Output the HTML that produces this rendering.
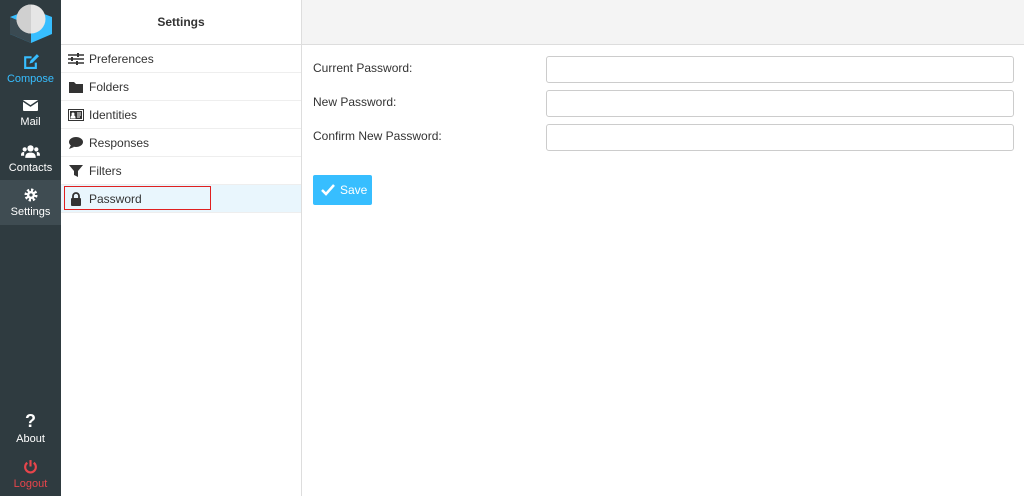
<!DOCTYPE html><html><head><style>
body{margin:0;width:1024px;height:496px;overflow:hidden;font-family:"Liberation Sans",sans-serif;font-size:12px;color:#333;background:#fff;position:relative}
.sb{position:absolute;left:0;top:0;width:61px;height:496px;background:#2f3b40}
.nav{position:absolute;left:0;width:61px;text-align:center;color:#fff;font-size:11px}
.nav svg{display:block;margin:0 auto 4px}
.list{position:absolute;left:61px;top:0;width:240px;height:496px;border-right:1px solid #ddd}
.lh{height:44px;border-bottom:1px solid #ddd;text-align:center;line-height:44px;font-weight:bold;font-size:12px;color:#333}
.row{height:27px;border-bottom:1px solid #eee;display:flex;align-items:center;padding-left:7px;font-size:12px}
.row svg{width:16px;height:14px;margin-right:5px}
.rh{position:absolute;left:302px;top:0;right:0;height:44px;background:#f4f4f4;border-bottom:1px solid #ddd}
.lab{position:absolute;left:313px;font-size:12px}
.inp{position:absolute;left:546px;width:466px;height:25px;border:1px solid #ccc;border-radius:3px}
</style></head><body>
<div class="sb">
<svg style="position:absolute;left:8px;top:0" width="46" height="44" viewBox="0 0 46 44"><polygon points="2,17 23,9 44,17 44,34 23,43 2,34" fill="#37beff"/><polygon points="2,17 23,26 23,43 2,34" fill="#3a4a52"/><circle cx="23" cy="19" r="14.5" fill="#e6e6e6"/><path d="M23 4.5a14.5 14.5 0 0 0 0 29z" fill="#d0d0d0"/></svg>
<div class="nav" style="top:53px;color:#37beff"><svg width="17" height="16" viewBox="0 0 16 15"><path d="M2 3h7v2H4v8h8V9h2v6H2z" fill="#37beff"/><path d="M7 10l1-3 6-6 2 2-6 6z" fill="#37beff"/></svg>Compose</div>
<div class="nav" style="top:99px"><svg width="15" height="13" viewBox="0 0 15 13"><rect x="0" y="1" width="15" height="11" rx="1" fill="#fff"/><path d="M0 2l7.5 5 7.5-5" stroke="#2f3b40" stroke-width="1.5" fill="none"/></svg>Mail</div>
<div class="nav" style="top:144px"><svg width="19" height="14" viewBox="0 0 18 13"><circle cx="9" cy="4" r="3" fill="#fff"/><circle cx="3.5" cy="5" r="2" fill="#fff"/><circle cx="14.5" cy="5" r="2" fill="#fff"/><path d="M4 13c0-4 2-5 5-5s5 1 5 5z M0 11c0-3 1-3.5 3-3.5L3 11z M18 11c0-3-1-3.5-3-3.5L15 11z" fill="#fff"/></svg>Contacts</div>
<div style="position:absolute;top:180px;left:0;width:61px;height:45px;background:#3f4c52"></div>
<div class="nav" style="top:188px"><svg width="14" height="14" viewBox="0 0 14 14"><circle cx="7" cy="7" r="5" fill="none" stroke="#fff" stroke-width="3" stroke-dasharray="2.2 1.7"/><circle cx="7" cy="7" r="4" fill="#fff"/><circle cx="7" cy="7" r="1.6" fill="#3f4c52"/></svg>Settings</div>
<div class="nav" style="top:413px"><div style="font-weight:bold;font-size:18px;line-height:17px;margin-bottom:3px">?</div>About</div>
<div class="nav" style="top:459px;color:#e8454b"><svg width="15" height="15" viewBox="0 0 14 14"><path d="M4 3.5a5 5 0 1 0 6 0" stroke="#e8454b" stroke-width="2" fill="none"/><path d="M7 1v6" stroke="#e8454b" stroke-width="2"/></svg>Logout</div>
</div>
<div class="list">
<div class="lh">Settings</div>
<div class="row"><svg viewBox="0 0 16 14"><path d="M0 3h16M0 7h16M0 11h16" stroke="#333" stroke-width="1.5"/><rect x="9" y="1" width="2" height="4" fill="#333"/><rect x="3" y="5" width="2" height="4" fill="#333"/><rect x="8" y="9" width="2" height="4" fill="#333"/></svg>Preferences</div>
<div class="row"><svg viewBox="0 0 16 14"><path d="M1 2h5l2 2h7v9H1z" fill="#333"/></svg>Folders</div>
<div class="row"><svg viewBox="0 0 16 14"><rect x="0.5" y="1.5" width="15" height="11" fill="none" stroke="#333"/><rect x="2" y="3" width="12" height="8" fill="#333"/><circle cx="5" cy="6" r="1.5" fill="#fff"/><path d="M3 10c0-2 1-2.5 2-2.5s2 .5 2 2.5z M9 5h4M9 7h4M9 9h3" stroke="#fff" fill="#fff"/></svg>Identities</div>
<div class="row"><svg viewBox="0 0 16 14"><ellipse cx="8" cy="6" rx="7" ry="5" fill="#333"/><path d="M3 9l-2 4 5-2z" fill="#333"/></svg>Responses</div>
<div class="row"><svg viewBox="0 0 16 14"><path d="M1 1h14l-5 6v6l-4-2V7z" fill="#333"/></svg>Filters</div>
<div class="row" style="background:#e9f6fd;position:relative"><svg viewBox="0 0 16 14"><path d="M5 6V4a3 3 0 0 1 6 0v2" stroke="#333" stroke-width="1.8" fill="none"/><rect x="3" y="6" width="10" height="8" rx="1" fill="#333"/></svg>Password<div style="position:absolute;left:3px;top:1px;width:145px;height:22px;border:1px solid #e02020"></div></div>
</div>
<div class="rh"></div>
<div class="lab" style="top:61px">Current Password:</div>
<div class="lab" style="top:95px">New Password:</div>
<div class="lab" style="top:129px">Confirm New Password:</div>
<div class="inp" style="top:56px"></div>
<div class="inp" style="top:90px"></div>
<div class="inp" style="top:124px"></div>
<div style="position:absolute;left:313px;top:175px;width:59px;height:30px;background:#37beff;border-radius:2px;color:#fff;font-size:12px;line-height:30px"><svg style="position:absolute;left:8px;top:9px" width="14" height="12" viewBox="0 0 14 12"><path d="M1 6l4 4 8-9" stroke="#fff" stroke-width="2.5" fill="none"/></svg><span style="position:absolute;left:27px">Save</span></div>
</body></html>
